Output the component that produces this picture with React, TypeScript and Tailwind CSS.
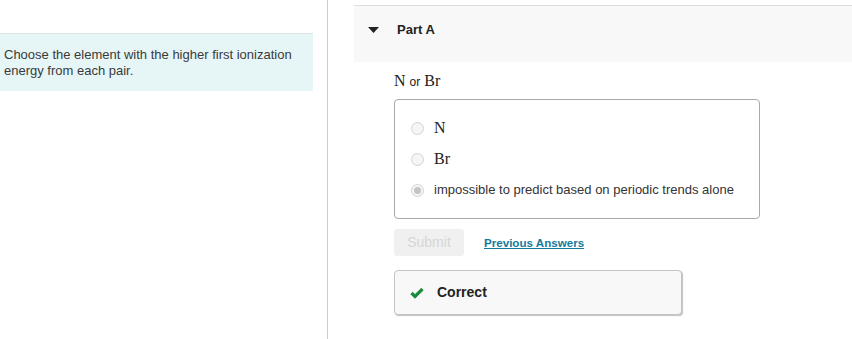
export default function App() {
  const options = [
    { label: 'N', serif: true, checked: false },
    { label: 'Br', serif: true, checked: false },
    { label: 'impossible to predict based on periodic trends alone', serif: false, checked: true },
  ];

  return (
    <div className="flex h-[339px] w-[852px] bg-white font-['Liberation_Sans',Arial,sans-serif] text-[#333]">
      {/* Left: instructions */}
      <div className="w-[328px] shrink-0 border-r border-[#c9ccd1]">
        <div className="mt-[33px] h-[58px] w-[313px] border-t border-[#dbe3e3] bg-[#e6f6f6] px-[4px] pt-[13px] text-[13px] leading-[16px] text-[#3a3a3a]">
          Choose the element with the higher first ionization energy from each pair.
        </div>
      </div>

      {/* Right: part */}
      <div className="flex-1 pl-[26px] pt-[5px]">
        <div className="flex h-[57px] items-start border-t border-[#dedede] bg-[#f8f8f8] pl-[14px] pt-[16px]">
          <svg width="11" height="6" viewBox="0 0 11 6" className="mt-[5px]">
            <path d="M0 0h11L5.5 6z" fill="#222" />
          </svg>
          <span className="ml-[18px] text-[13px] font-bold leading-[16px] text-[#222]">Part A</span>
        </div>

        <div className="pl-[40px]">
          <div className="mt-[9px] h-[19px] text-[16px] leading-[20px] text-[#222] font-['Liberation_Serif',serif]">
            N <span className="font-['Liberation_Sans',Arial,sans-serif] text-[12px]">or</span> Br
          </div>

          <div className="mt-[9px] flex h-[120px] w-[366px] flex-col gap-[11px] rounded-[4px] border border-[#a9a9a9] pl-[16px] pt-[18px]">
            {options.map((o) => (
              <label key={o.label} className="flex h-[20px] items-center">
                <span className="flex h-[13px] w-[13px] items-center justify-center rounded-full border border-[#d4d4d4] bg-[#f5f5f5]">
                  {o.checked && <span className="h-[7px] w-[7px] rounded-full bg-[#c4c4c4]" />}
                </span>
                <span
                  className={
                    o.serif
                      ? "ml-[10px] text-[16px] text-[#222] font-['Liberation_Serif',serif]"
                      : 'ml-[10px] text-[13px] text-[#333]'
                  }
                >
                  {o.label}
                </span>
              </label>
            ))}
          </div>

          <div className="mt-[10px] flex items-center">
            <button className="h-[27px] w-[70px] rounded-[3px] bg-[#f0f0f0] text-[14px] text-[#d6d6d6]">Submit</button>
            <a className="ml-[20px] text-[11.6px] font-bold text-[#137a9c] underline">Previous Answers</a>
          </div>

          <div className="mt-[14px] flex h-[45px] w-[288px] items-center rounded-[4px] border border-[#c4c4c4] bg-[#f8f8f8] pl-[15px] shadow-[1px_1px_1px_rgba(0,0,0,0.25)]">
            <svg width="14" height="12" viewBox="0 0 14 12">
              <path d="M1.5 6l3.5 3.5L12.5 2" fill="none" stroke="#1a8a3c" strokeWidth="3.2" />
            </svg>
            <span className="ml-[13px] text-[14px] font-bold text-[#222]">Correct</span>
          </div>
        </div>
      </div>
    </div>
  );
}
